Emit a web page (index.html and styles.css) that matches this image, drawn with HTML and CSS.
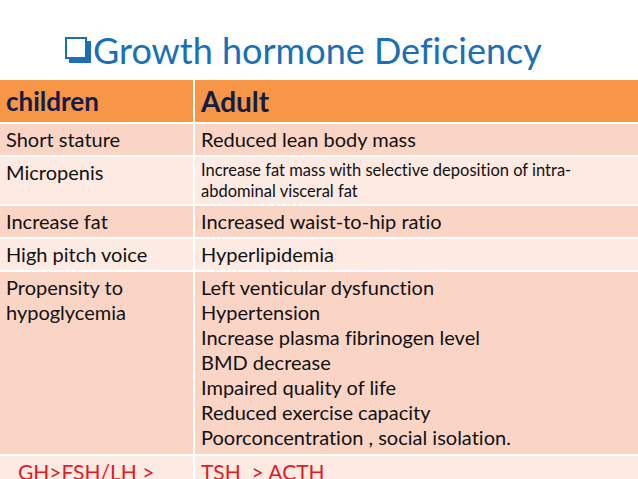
FILE: index.html
```html
<!DOCTYPE html>
<html>
<head>
<meta charset="utf-8">
<link rel="stylesheet" href="styles.css">
</head>
<body>
<div class="slide">
  <h1 class="title"><span class="box"></span><span class="title-text">Growth hormone Deficiency</span></h1>
  <table class="grid">
    <colgroup><col class="c1"><col class="c2"></colgroup>
    <thead>
      <tr class="head"><th class="h-child">children</th><th class="h-adult">Adult</th></tr>
    </thead>
    <tbody>
      <tr class="dark"><td>Short stature</td><td>Reduced lean body mass</td></tr>
      <tr class="light"><td>Micropenis</td><td class="small">Increase fat mass with selective deposition of intra-<br>abdominal visceral fat</td></tr>
      <tr class="dark"><td>Increase fat</td><td>Increased waist-to-hip ratio</td></tr>
      <tr class="light"><td>High pitch voice</td><td>Hyperlipidemia</td></tr>
      <tr class="dark tall"><td>Propensity to<br>hypoglycemia</td><td>Left venticular dysfunction<br>Hypertension<br>Increase plasma fibrinogen level<br>BMD decrease<br>Impaired quality of life<br>Reduced exercise capacity<br>Poorconcentration , social isolation.</td></tr>
      <tr class="light last"><td class="red first-red">GH&gt;FSH/LH &gt;</td><td class="red">TSH &nbsp;&gt; ACTH</td></tr>
    </tbody>
  </table>
</div>
</body>
</html>
```
FILE: styles.css
```css
html, body {
  margin: 0;
  padding: 0;
  background: #ffffff;
}
.slide {
  width: 638px;
  height: 479px;
  overflow: hidden;
  font-family: Lato, "Open Sans", sans-serif;
  font-variant-ligatures: none;
}
.title {
  margin: 0;
  padding: 28px 0 0 65px;
  height: 80px;
  box-sizing: border-box;
  display: flex;
  align-items: flex-start;
  font-weight: 400;
  font-size: 36px;
  line-height: 44px;
  color: #1b6fb6;
}
.box {
  flex: none;
  width: 18px;
  height: 18px;
  border: 2px solid #1b6fb6;
  box-shadow: 4px 4px 0 #1b6fb6;
  margin-top: 9px;
  margin-right: 6px;
}
.grid {
  width: 638px;
  border-collapse: collapse;
  table-layout: fixed;
}
.c1 { width: 194px; }
.grid th, .grid td {
  text-align: left;
  vertical-align: top;
  border: 2px solid #ffffff;
  border-top: 0;
  padding: 3px 6px 3px 6px;
  font-size: 20px;
  line-height: 25px;
  color: #111111;
}
.grid tr > :first-child { border-left: 0; }
.grid tr > :last-child { border-right: 0; }
.grid .head th {
  background: #f79646;
  font-weight: 700;
  color: #131c48;
  height: 42px;
  padding: 0 6px;
  vertical-align: middle;
  border-bottom: 2px solid #ffffff;
}
.grid .head .h-child { font-size: 26px; }
.grid .head .h-adult { font-size: 28px; }
.dark td { background: #fad5c6; }
.light td { background: #fdeae3; }
.grid .small {
  font-size: 16.5px;
  line-height: 20.5px;
}
.grid .tall td { padding-bottom: 4px; }
.grid .red {
  color: #e31b23;
  font-size: 21px;
}
.grid .first-red { padding-left: 18px; }
```
